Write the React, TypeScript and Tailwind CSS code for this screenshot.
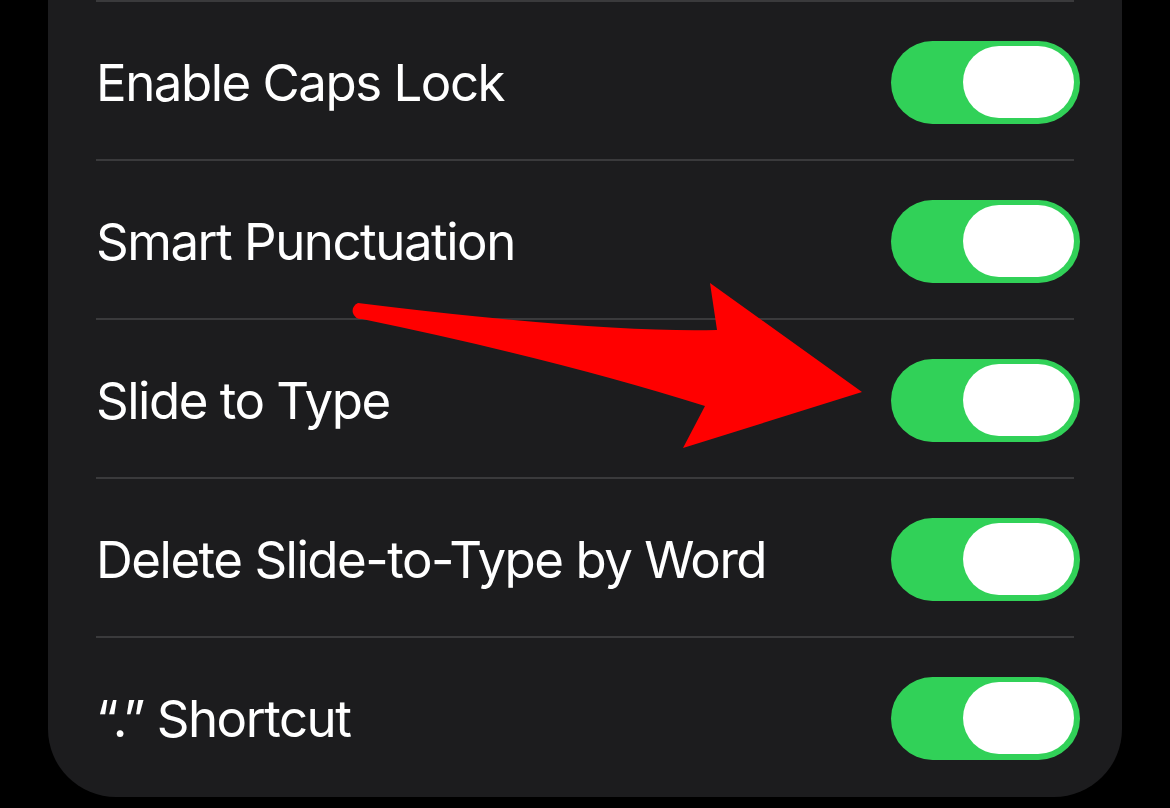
const rows = [
  "Enable Caps Lock",
  "Smart Punctuation",
  "Slide to Type",
  "Delete Slide-to-Type by Word",
  "\u201C.\u201D Shortcut",
];

function Toggle() {
  return (
    <div className="mt-[3px] flex h-[83px] w-[189px] shrink-0 items-center justify-end rounded-full bg-[#31d158] pr-[6px]">
      <div className="h-[72px] w-[111px] rounded-full bg-white" />
    </div>
  );
}

function Arrow() {
  return (
    <svg
      className="pointer-events-none absolute left-0 top-0"
      width="1170"
      height="808"
      viewBox="0 0 1170 808"
      aria-hidden="true"
    >
      <path
        d="M358 303 Q600 333 717 330 L710 283 L862 392 L683 448 L705 406 Q560 360 362 319 A8.3 8.3 0 0 1 358 303 Z"
        fill="#ff0000"
      />
    </svg>
  );
}

export default function App() {
  return (
    <div className="relative h-[808px] w-[1170px] overflow-hidden bg-black font-['Inter','Liberation_Sans',sans-serif]">
      <div className="ml-[48px] w-[1074px] rounded-b-[68px] bg-[#1c1c1e] pb-[2px] pl-[48px] pr-[42px]">
        {rows.map((label) => (
          <div key={label}>
            <div className="mr-[6px] h-[2px] bg-[#3a3a3c]" />
            <div className="flex h-[157px] items-center justify-between">
              <span className="mt-[3px] text-[51px] leading-none tracking-[-1.5px] text-white">
                {label}
              </span>
              <Toggle />
            </div>
          </div>
        ))}
      </div>
      <Arrow />
    </div>
  );
}
